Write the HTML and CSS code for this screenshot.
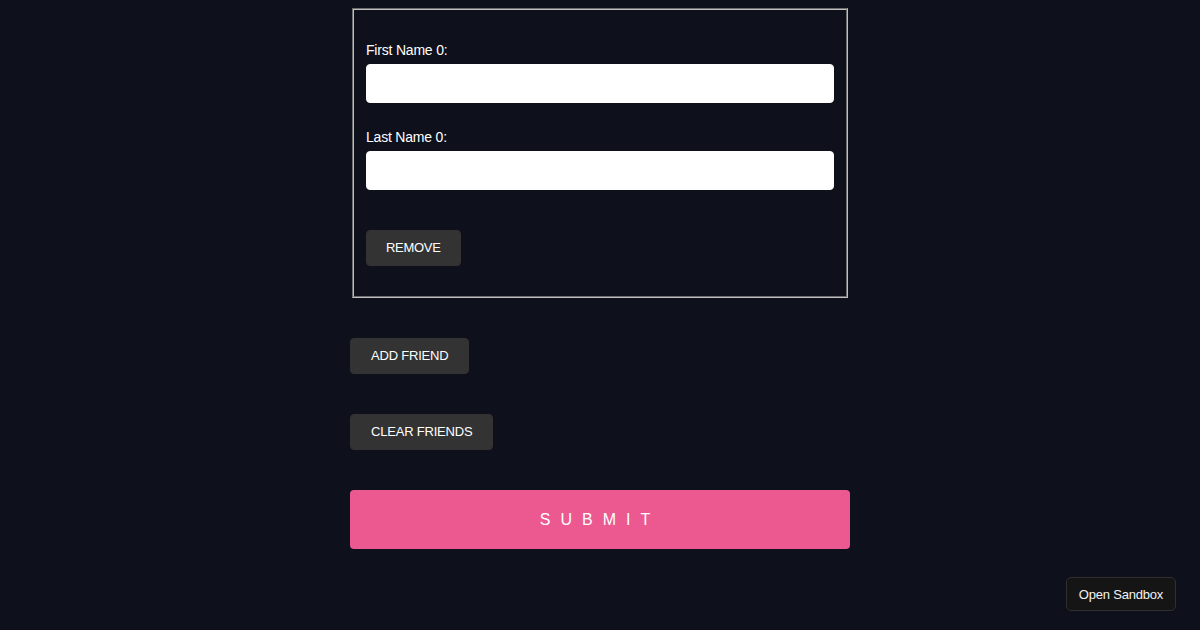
FILE: index.html
```html
<!DOCTYPE html>
<html>
<head>
<meta charset="utf-8">
<link rel="stylesheet" href="styles.css">
</head>
<body>
<form class="form">
  <fieldset class="friend">
    <label class="label">First Name 0:</label>
    <input class="input" type="text">
    <label class="label">Last Name 0:</label>
    <input class="input" type="text">
    <button class="btn btn-remove" type="button">Remove</button>
  </fieldset>
  <button class="btn" type="button">Add Friend</button>
  <button class="btn" type="button">Clear Friends</button>
  <button class="submit" type="submit">Submit</button>
</form>
<button class="sandbox" type="button">Open Sandbox</button>
</body>
</html>
```
FILE: styles.css
```css
html, body {
  background: #0e101c;
}
body {
  margin: 8px;
  font-family: "Liberation Sans", Arial, sans-serif;
  color: #fff;
  letter-spacing: -0.2px;
}
.form {
  max-width: 500px;
  margin: 0 auto;
}
.friend {
  margin: 0 2px;
  padding: 5.6px 12px 10px;
  border: 2px groove rgb(192, 192, 192);
}
.label {
  display: block;
  line-height: 28px;
  margin-top: 20px;
  margin-bottom: 0;
  color: #fff;
  font-size: 14px;
}
.input {
  display: block;
  box-sizing: border-box;
  width: 100%;
  height: 39px;
  border-radius: 4px;
  border: 1px solid #fff;
  background: #fff;
  padding: 10px 15px;
  margin: 0 0 10px;
  font-size: 14px;
  font-family: inherit;
}
.btn {
  display: block;
  box-sizing: border-box;
  height: 36px;
  margin-top: 40px;
  margin-bottom: 20px;
  padding: 0 20px;
  border: 1px solid #333;
  border-radius: 4px;
  background: #333;
  color: #fff;
  text-transform: uppercase;
  font-family: inherit;
  font-size: 13px;
  letter-spacing: -0.2px;
}
.btn-remove {
  padding: 0 19px;
  letter-spacing: -0.3px;
}
.submit {
  display: block;
  box-sizing: border-box;
  width: 100%;
  height: 59px;
  margin-top: 40px;
  padding: 2px 0 0;
  border: none;
  border-radius: 4px;
  background: #ec5990;
  color: #fff;
  text-transform: uppercase;
  font-family: inherit;
  font-size: 16px;
  font-weight: 400;
  letter-spacing: 10px;
}
.sandbox {
  position: fixed;
  right: 24px;
  bottom: 19px;
  box-sizing: border-box;
  width: 110px;
  height: 34px;
  padding: 0;
  background: #151515;
  border: 1px solid #2f2f2f;
  border-radius: 5px;
  color: #f2f2f2;
  font-family: inherit;
  font-size: 13px;
  letter-spacing: -0.2px;
}
```
